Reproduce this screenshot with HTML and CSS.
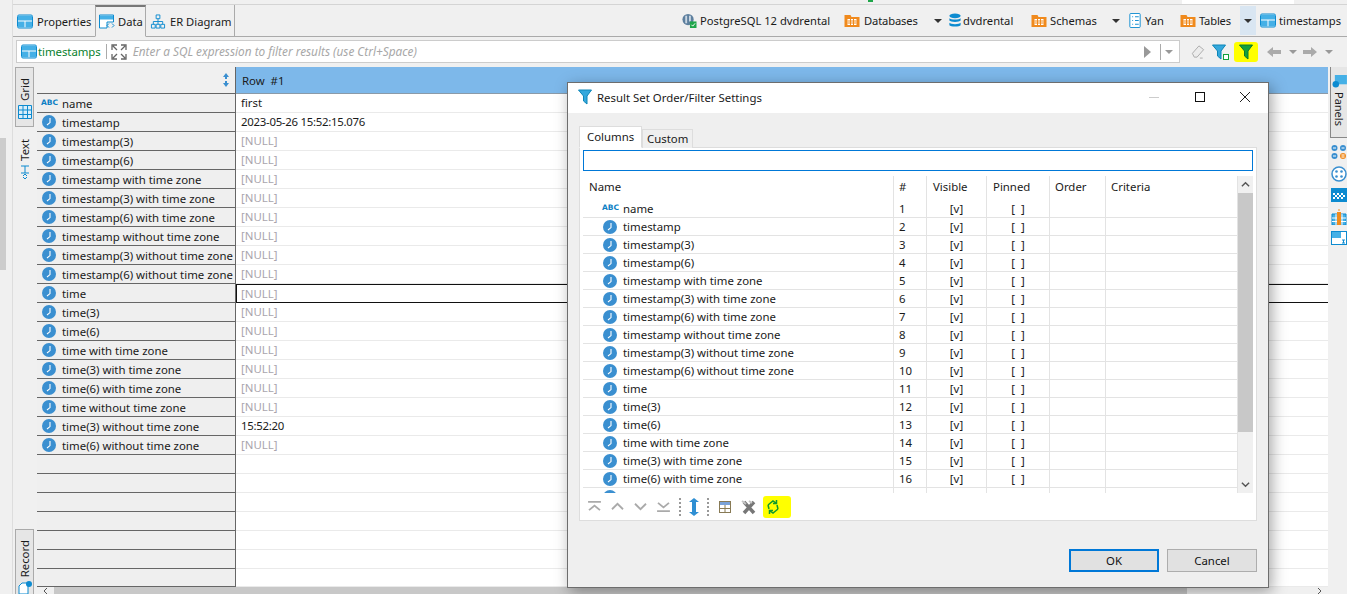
FILE: index.html

```html
<!DOCTYPE html>
<html lang="en">
<head>
  <meta charset="UTF-8">
  <title>Result Set Order/Filter Settings</title>
  <link rel="stylesheet" href="styles.css">
</head>
<body>
  <svg class="defs" width="0" height="0">
    <symbol id="clock" viewBox="0 0 14 14">
      <circle cx="7" cy="7" r="7" fill="#3a8fd0"/>
      <path d="M8 3v4.6L5 10" fill="none" stroke="#fff" stroke-width="1.1"/>
    </symbol>
    <symbol id="table" viewBox="0 0 16 14">
      <rect x=".5" y=".5" width="15" height="13" rx="1.5" fill="#fff" stroke="#0d8bd0"/>
      <rect x="1" y="1" width="14" height="5" fill="#45b0e6"/>
      <rect x="1" y="7" width="6.500" height="6" fill="#45b0e6"/>
      <rect x="8.500" y="7" width="6.500" height="6" fill="#45b0e6"/>
    </symbol>
    <symbol id="funnel" viewBox="0 0 14 16">
      <path d="M.5 1h13L9 7v8L5.500 12V7z" fill="#35a8dc" stroke="#0c86b8"/>
    </symbol>
    <symbol id="folder" viewBox="0 0 15 15">
      <path d="M0 2h6l1 2h8v10H0z" fill="#f08a1d"/>
      <rect x="3" y="6" width="9" height="6" fill="#fff"/>
      <path d="M3 8h9M3 10h9M6 6v6M9 6v6" stroke="#f08a1d"/>
    </symbol>
  </svg>

  <div class="left-strip"><span class="strip-thumb"></span></div>

  <div class="workbench">
    <div class="topline">
      <span class="topline-mark"></span>
      <span class="topline-box"></span>
    </div>

    <div class="tabbar">
      <div class="tab"><svg class="ico16"><use href="#table"/></svg>Properties</div>
      <div class="tab tab-active">
        <svg class="ico16" viewBox="0 0 16 14"><path d="M.5.5h14v7H8v6H.5z" fill="#fff" stroke="#0d8bd0"/><rect x="1" y="1" width="13" height="4" fill="#45b0e6"/><path d="M10 9l-2 2 2 2M13 9l2 2-2 2" fill="none" stroke="#0d8bd0"/></svg>
        Data
      </div>
      <div class="tab tab-last">
        <svg class="ico16" viewBox="0 0 16 16"><path d="M6 1h4v4H6zM1 11h4v4H1zM6 11h4v4H6zM11 11h4v4h-4zM8 5v6M3 11V8h10v3" fill="none" stroke="#0d8bd0"/></svg>
        ER Diagram
      </div>

      <div class="crumbs">
        <span class="crumb crumb-pg">
          <svg class="ico16" viewBox="0 0 16 16"><ellipse cx="7" cy="7" rx="6" ry="6" fill="#5d7f9e"/><path d="M5 3v8M9 3v6" stroke="#c9d6e2" stroke-width="2"/><rect x="9" y="9" width="7" height="7" fill="#1ea64a"/><path d="M10.500 12.500l1.500 1.500 2.500-3" fill="none" stroke="#fff"/></svg>
          PostgreSQL 12 dvdrental
        </span>
        <span class="crumb crumb-db"><svg class="ico16"><use href="#folder"/></svg>Databases<i class="caret"></i></span>
        <span class="crumb crumb-rental">
          <svg class="ico16" viewBox="0 0 14 16"><ellipse cx="7" cy="3" rx="6" ry="2.500" fill="#0d8bd0"/><path d="M1 5.500c1 2 11 2 12 0v2.500c-1 2-11 2-12 0zM1 10.500c1 2 11 2 12 0V13c-1 2-11 2-12 0z" fill="#0d8bd0"/></svg>
          dvdrental
        </span>
        <span class="crumb crumb-schemas"><svg class="ico16"><use href="#folder"/></svg>Schemas<i class="caret"></i></span>
        <span class="crumb crumb-yan">
          <svg class="ico16" viewBox="0 0 14 16"><rect x="1.500" y=".5" width="11" height="15" rx="1" fill="#fff" stroke="#0d8bd0"/><path d="M4 4h1M7 4h4M4 8h1M7 8h4M4 12h1M7 12h4" stroke="#0d8bd0"/></svg>
          Yan
        </span>
        <span class="crumb crumb-tables"><svg class="ico16"><use href="#folder"/></svg>Tables</span>
        <span class="crumb-drop"><i class="caret"></i></span>
        <span class="crumb crumb-ts"><svg class="ico16"><use href="#table"/></svg>timestamps</span>
      </div>
    </div>

    <div class="filterbar">
      <div class="filter-input">
        <svg class="ico16"><use href="#table"/></svg>
        <span class="filter-table">timestamps</span>
        <span class="filter-sep"></span>
        <svg class="ico16 filter-expand" viewBox="0 0 16 16"><path d="M1 6V1h5M2 2l4 4M10 1h5v5M14 2l-4 4M1 10v5h5M2 14l4-4M15 10v5h-5M14 14l-4-4" fill="none" stroke="#666" stroke-width="1.300"/></svg>
        <span class="filter-hint">Enter a SQL expression to filter results (use Ctrl+Space)</span>
        <span class="filter-run"></span>
        <span class="filter-sep2"></span>
        <i class="caret caret-grey"></i>
      </div>
      <div class="filter-tools">
        <svg class="ico16 tool-eraser" viewBox="0 0 16 16"><path d="M2 10l7-8 5 4-7 8H4z" fill="#ececec" stroke="#aaa"/><path d="M10 15h3" stroke="#aaa"/></svg>
        <span class="tool-funnel"><svg class="ico-funnel"><use href="#funnel"/></svg><i class="tool-badge"></i></span>
        <span class="mark-yellow mark-funnel">
          <svg class="ico-funnel" viewBox="0 0 14 16"><path d="M.5 1h13L9 7v8L5.500 12V7z" fill="#12a13c" stroke="#0a7a2b"/></svg>
        </span>
        <svg class="nav-arrow" viewBox="0 0 14 10"><path d="M0 5l6-5v3h8v4H6v3z" fill="#aaa"/></svg>
        <i class="caret caret-grey"></i>
        <svg class="nav-arrow" viewBox="0 0 14 10"><path d="M14 5L8 0v3H0v4h8v3z" fill="#aaa"/></svg>
        <i class="caret caret-grey"></i>
      </div>
    </div>

    <div class="editor">
      <div class="side-tabs">
        <div class="vtab vtab-on"><span>Grid</span>
          <svg class="vtab-ico" viewBox="0 0 14 14"><path d="M.5.5h13v13H.5zM.5 5h13M.5 9.500h13M5 .5v13M9.500 .5v13" fill="#d9eefa" stroke="#0d8bd0"/></svg>
        </div>
        <div class="vtab vtab-text"><span>Text</span>
          <svg class="vtab-ico" viewBox="0 0 14 14"><path d="M3 1h8M7 1v7M3 8h8M5 11l2-2 2 2M5 12l2 2 2-2" fill="none" stroke="#0d8bd0"/></svg>
        </div>
        <div class="vtab vtab-record"><span>Record</span>
          <svg class="vtab-ico" viewBox="0 0 14 14"><path d="M1 5l3-3h6v11H1z" fill="#fff" stroke="#0d8bd0"/><circle cx="11" cy="3" r="3" fill="#0d8bd0"/></svg>
        </div>
      </div>

      <div class="grid">
        <div class="grid-head">
          <div class="head-gutter"><svg class="sort-ico" viewBox="0 0 8 14"><path d="M4 0l3 4H5v2H3V4H1zM4 14l3-4H5V8H3v2H1z" fill="#3a8fd0"/></svg></div>
          <div class="head-cell">Row&nbsp; #1</div>
        </div>
        <div class="grid-row"><div class="gutter"><span class="abc">ABC</span>name</div><div class="cell">first</div></div>
        <div class="grid-row"><div class="gutter"><svg class="clock"><use href="#clock"/></svg>timestamp</div><div class="cell cell-date">2023-05-26 15:52:15.076</div></div>
        <div class="grid-row"><div class="gutter"><svg class="clock"><use href="#clock"/></svg>timestamp(3)</div><div class="cell null">[NULL]</div></div>
        <div class="grid-row"><div class="gutter"><svg class="clock"><use href="#clock"/></svg>timestamp(6)</div><div class="cell null">[NULL]</div></div>
        <div class="grid-row"><div class="gutter"><svg class="clock"><use href="#clock"/></svg>timestamp with time zone</div><div class="cell null">[NULL]</div></div>
        <div class="grid-row"><div class="gutter"><svg class="clock"><use href="#clock"/></svg>timestamp(3) with time zone</div><div class="cell null">[NULL]</div></div>
        <div class="grid-row"><div class="gutter"><svg class="clock"><use href="#clock"/></svg>timestamp(6) with time zone</div><div class="cell null">[NULL]</div></div>
        <div class="grid-row"><div class="gutter"><svg class="clock"><use href="#clock"/></svg>timestamp without time zone</div><div class="cell null">[NULL]</div></div>
        <div class="grid-row"><div class="gutter"><svg class="clock"><use href="#clock"/></svg>timestamp(3) without time zone</div><div class="cell null">[NULL]</div></div>
        <div class="grid-row"><div class="gutter"><svg class="clock"><use href="#clock"/></svg>timestamp(6) without time zone</div><div class="cell null">[NULL]</div></div>
        <div class="grid-row"><div class="gutter"><svg class="clock"><use href="#clock"/></svg>time</div><div class="cell null cell-focus">[NULL]</div></div>
        <div class="grid-row"><div class="gutter"><svg class="clock"><use href="#clock"/></svg>time(3)</div><div class="cell null">[NULL]</div></div>
        <div class="grid-row"><div class="gutter"><svg class="clock"><use href="#clock"/></svg>time(6)</div><div class="cell null">[NULL]</div></div>
        <div class="grid-row"><div class="gutter"><svg class="clock"><use href="#clock"/></svg>time with time zone</div><div class="cell null">[NULL]</div></div>
        <div class="grid-row"><div class="gutter"><svg class="clock"><use href="#clock"/></svg>time(3) with time zone</div><div class="cell null">[NULL]</div></div>
        <div class="grid-row"><div class="gutter"><svg class="clock"><use href="#clock"/></svg>time(6) with time zone</div><div class="cell null">[NULL]</div></div>
        <div class="grid-row"><div class="gutter"><svg class="clock"><use href="#clock"/></svg>time without time zone</div><div class="cell null">[NULL]</div></div>
        <div class="grid-row"><div class="gutter"><svg class="clock"><use href="#clock"/></svg>time(3) without time zone</div><div class="cell cell-date">15:52:20</div></div>
        <div class="grid-row"><div class="gutter"><svg class="clock"><use href="#clock"/></svg>time(6) without time zone</div><div class="cell null">[NULL]</div></div>
        <div class="grid-row"><div class="gutter"></div><div class="cell"></div></div>
        <div class="grid-row"><div class="gutter"></div><div class="cell"></div></div>
        <div class="grid-row"><div class="gutter"></div><div class="cell"></div></div>
        <div class="grid-row"><div class="gutter"></div><div class="cell"></div></div>
        <div class="grid-row"><div class="gutter"></div><div class="cell"></div></div>
        <div class="grid-row"><div class="gutter"></div><div class="cell"></div></div>
        <div class="grid-row grid-row-end"><div class="gutter"></div><div class="cell"></div></div>
        <div class="hscroll">
          <svg class="hscroll-arrow" viewBox="0 0 17 7"><path d="M10 1L7 4l3 3" fill="none" stroke="#555"/></svg>
          <span class="hscroll-thumb"></span>
          <svg class="hscroll-arrow hscroll-arrow-r" viewBox="0 0 17 7"><path d="M7 1l3 3-3 3" fill="none" stroke="#555"/></svg>
        </div>
      </div>

      <div class="right-panel">
        <div class="vtab-panels"><span>Panels</span>
          <svg class="panels-ico" viewBox="0 0 16 14"><rect x="3" y="0" width="13" height="10" fill="#45b0e6"/><circle cx="4" cy="10" r="3.500" fill="#0d8bd0"/></svg>
        </div>
        <svg class="panel-ico" viewBox="0 0 16 14"><circle cx="3.500" cy="3" r="3" fill="#3a8fd0"/><circle cx="12" cy="3" r="3" fill="#3a8fd0"/><circle cx="3.500" cy="11" r="3" fill="#3a8fd0"/><circle cx="12" cy="11" r="3" fill="#f08a1d"/><path d="M2 3h3M10.500 3h3M2 11h3M10.500 10h3M10.500 12h3" stroke="#fff"/></svg>
        <svg class="panel-ico panel-ico-tall" viewBox="0 0 16 16"><circle cx="8" cy="8" r="7" fill="#fff" stroke="#3a8fd0" stroke-width="1.500"/><circle cx="5.500" cy="5.500" r="1.300" fill="#3a8fd0"/><circle cx="10.500" cy="5.500" r="1.300" fill="#3a8fd0"/><circle cx="5.500" cy="10.500" r="1.300" fill="#3a8fd0"/><circle cx="10.500" cy="10.500" r="1.300" fill="#3a8fd0"/></svg>
        <svg class="panel-ico" viewBox="0 0 16 14"><rect width="16" height="14" fill="#0d8bd0"/><path d="M2 5h2v2H2zM6 5h2v2H6zM10 5h2v2h-2zM4 7h2v2H4zM8 7h2v2H8zM12 7h2v2h-2zM2 9h2v2H2zM6 9h2v2H6zM10 9h2v2h-2z" fill="#fff"/></svg>
        <svg class="panel-ico panel-ico-tall" viewBox="0 0 16 16"><path d="M1 5h14v11H1z" fill="#45b0e6" stroke="#0d8bd0"/><path d="M1 9h14M1 12.500h14M5 5v11M11 5v11" stroke="#fff"/><rect x="6" y="3" width="4" height="13" fill="#f08a1d"/><path d="M8 0v2" stroke="#f08a1d"/></svg>
        <svg class="panel-ico" viewBox="0 0 16 14"><rect x=".5" y=".5" width="15" height="13" fill="#fff" stroke="#0d8bd0"/><rect x="1" y="1" width="9" height="6" fill="#45b0e6"/><path d="M11 9h3M12.500 9v3M11 12h3" stroke="#0d8bd0"/></svg>
      </div>
    </div>
  </div>

  <!-- floating dialog -->
  <div class="dialog">
    <div class="dlg-title">
      <svg class="ico-funnel"><use href="#funnel"/></svg>
      <span class="dlg-caption">Result Set Order/Filter Settings</span>
      <span class="win-min"></span>
      <span class="win-max"></span>
      <svg class="win-close" viewBox="0 0 12 12"><path d="M1 1l10 10M11 1L1 11" stroke="#222" stroke-width="1"/></svg>
    </div>

    <div class="dlg-body">
      <div class="dlg-tabs">
        <div class="dlg-tab dlg-tab-on">Columns</div>
        <div class="dlg-tab">Custom</div>
      </div>

      <div class="dlg-panel">
        <div class="dlg-search"></div>

        <div class="col-area">
          <div class="col-table">
            <div class="col-row col-head">
              <div class="c-name">Name</div><div class="c-num">#</div><div class="c-vis c-left">Visible</div><div class="c-pin c-left">Pinned</div><div class="c-ord">Order</div><div class="c-crit">Criteria</div>
            </div>
            <div class="col-row"><div class="c-name"><span class="abc">ABC</span>name</div><div class="c-num">1</div><div class="c-vis">[v]</div><div class="c-pin">[&nbsp; ]</div><div class="c-ord"></div><div class="c-crit"></div></div>
            <div class="col-row"><div class="c-name"><svg class="clock"><use href="#clock"/></svg>timestamp</div><div class="c-num">2</div><div class="c-vis">[v]</div><div class="c-pin">[&nbsp; ]</div><div class="c-ord"></div><div class="c-crit"></div></div>
            <div class="col-row"><div class="c-name"><svg class="clock"><use href="#clock"/></svg>timestamp(3)</div><div class="c-num">3</div><div class="c-vis">[v]</div><div class="c-pin">[&nbsp; ]</div><div class="c-ord"></div><div class="c-crit"></div></div>
            <div class="col-row"><div class="c-name"><svg class="clock"><use href="#clock"/></svg>timestamp(6)</div><div class="c-num">4</div><div class="c-vis">[v]</div><div class="c-pin">[&nbsp; ]</div><div class="c-ord"></div><div class="c-crit"></div></div>
            <div class="col-row"><div class="c-name"><svg class="clock"><use href="#clock"/></svg>timestamp with time zone</div><div class="c-num">5</div><div class="c-vis">[v]</div><div class="c-pin">[&nbsp; ]</div><div class="c-ord"></div><div class="c-crit"></div></div>
            <div class="col-row"><div class="c-name"><svg class="clock"><use href="#clock"/></svg>timestamp(3) with time zone</div><div class="c-num">6</div><div class="c-vis">[v]</div><div class="c-pin">[&nbsp; ]</div><div class="c-ord"></div><div class="c-crit"></div></div>
            <div class="col-row"><div class="c-name"><svg class="clock"><use href="#clock"/></svg>timestamp(6) with time zone</div><div class="c-num">7</div><div class="c-vis">[v]</div><div class="c-pin">[&nbsp; ]</div><div class="c-ord"></div><div class="c-crit"></div></div>
            <div class="col-row"><div class="c-name"><svg class="clock"><use href="#clock"/></svg>timestamp without time zone</div><div class="c-num">8</div><div class="c-vis">[v]</div><div class="c-pin">[&nbsp; ]</div><div class="c-ord"></div><div class="c-crit"></div></div>
            <div class="col-row"><div class="c-name"><svg class="clock"><use href="#clock"/></svg>timestamp(3) without time zone</div><div class="c-num">9</div><div class="c-vis">[v]</div><div class="c-pin">[&nbsp; ]</div><div class="c-ord"></div><div class="c-crit"></div></div>
            <div class="col-row"><div class="c-name"><svg class="clock"><use href="#clock"/></svg>timestamp(6) without time zone</div><div class="c-num">10</div><div class="c-vis">[v]</div><div class="c-pin">[&nbsp; ]</div><div class="c-ord"></div><div class="c-crit"></div></div>
            <div class="col-row"><div class="c-name"><svg class="clock"><use href="#clock"/></svg>time</div><div class="c-num">11</div><div class="c-vis">[v]</div><div class="c-pin">[&nbsp; ]</div><div class="c-ord"></div><div class="c-crit"></div></div>
            <div class="col-row"><div class="c-name"><svg class="clock"><use href="#clock"/></svg>time(3)</div><div class="c-num">12</div><div class="c-vis">[v]</div><div class="c-pin">[&nbsp; ]</div><div class="c-ord"></div><div class="c-crit"></div></div>
            <div class="col-row"><div class="c-name"><svg class="clock"><use href="#clock"/></svg>time(6)</div><div class="c-num">13</div><div class="c-vis">[v]</div><div class="c-pin">[&nbsp; ]</div><div class="c-ord"></div><div class="c-crit"></div></div>
            <div class="col-row"><div class="c-name"><svg class="clock"><use href="#clock"/></svg>time with time zone</div><div class="c-num">14</div><div class="c-vis">[v]</div><div class="c-pin">[&nbsp; ]</div><div class="c-ord"></div><div class="c-crit"></div></div>
            <div class="col-row"><div class="c-name"><svg class="clock"><use href="#clock"/></svg>time(3) with time zone</div><div class="c-num">15</div><div class="c-vis">[v]</div><div class="c-pin">[&nbsp; ]</div><div class="c-ord"></div><div class="c-crit"></div></div>
            <div class="col-row"><div class="c-name"><svg class="clock"><use href="#clock"/></svg>time(6) with time zone</div><div class="c-num">16</div><div class="c-vis">[v]</div><div class="c-pin">[&nbsp; ]</div><div class="c-ord"></div><div class="c-crit"></div></div>
            <div class="col-row"><div class="c-name"><svg class="clock"><use href="#clock"/></svg>time without time zone</div><div class="c-num">17</div><div class="c-vis">[v]</div><div class="c-pin">[&nbsp; ]</div><div class="c-ord"></div><div class="c-crit"></div></div>
          </div>
          <div class="vscroll">
            <svg class="vscroll-arrow" viewBox="0 0 10 6"><path d="M1 5l4-4 4 4" fill="none" stroke="#555" stroke-width="1.600"/></svg>
            <div class="vscroll-track"><span class="vscroll-thumb"></span></div>
            <svg class="vscroll-arrow" viewBox="0 0 10 6"><path d="M1 1l4 4 4-4" fill="none" stroke="#555" stroke-width="1.600"/></svg>
          </div>
        </div>

        <div class="col-tools">
          <svg class="tool" viewBox="0 0 16 12"><path d="M1 1h14M2 10l6-5 6 5" fill="none" stroke="#aaa" stroke-width="2"/></svg>
          <svg class="tool" viewBox="0 0 16 12"><path d="M2 9l6-6 6 6" fill="none" stroke="#aaa" stroke-width="2"/></svg>
          <svg class="tool" viewBox="0 0 16 12"><path d="M2 3l6 6 6-6" fill="none" stroke="#aaa" stroke-width="2"/></svg>
          <svg class="tool" viewBox="0 0 16 12"><path d="M1 11h14M2 2l6 5 6-5" fill="none" stroke="#aaa" stroke-width="2"/></svg>
          <span class="tool-sep"></span>
          <svg class="tool-v" viewBox="0 0 12 18"><path d="M6 0l5 4H8v10h3l-5 4-5-4h3V4H1z" fill="#2f8fd3"/></svg>
          <span class="tool-sep"></span>
          <svg class="tool-t" viewBox="0 0 12 12"><rect x=".5" y=".5" width="11" height="11" fill="#fff" stroke="#887a55"/><rect x="1" y="1" width="10" height="3" fill="#7aa2d8"/><path d="M.5 7.500h11M6 4v8" stroke="#887a55"/></svg>
          <svg class="tool-x" viewBox="0 0 16 16"><path d="M3 3l10 11M13 3L3 14" stroke="#777" stroke-width="3.500"/><path d="M1 2l4 3M8 2l3 2" stroke="#c4c4c4" stroke-width="2"/></svg>
          <span class="mark-yellow mark-sync">
            <svg class="tool-sync" viewBox="0 0 16 16"><path d="M3 6l5-4 3 2M11.500 1v3.500H8M13 10l-5 4-3-2M4.500 15v-3.500H8" fill="none" stroke="#109a2e" stroke-width="1.500"/><path d="M3 6l1 4M13 10l-1-4" stroke="#109a2e" stroke-width="1.500"/></svg>
          </span>
        </div>
      </div>

      <div class="dlg-actions">
        <button class="btn btn-ok">OK</button>
        <button class="btn">Cancel</button>
      </div>
    </div>
  </div>
</body>
</html>
```

FILE: styles.css

```css
* {
  box-sizing: border-box;
}
html, body {
  margin: 0;
  height: 100%;
}
body {
  display: flex;
  width: 1347px;
  height: 594px;
  overflow: hidden;
  font-family: "Noto Sans", Arial, sans-serif;
  font-size: 11.4px;
  color: #1a1a1a;
  background-color: #f0f0f0;
}
.defs {
  position: absolute;
}
.ico16 {
  width: 16px;
  height: 15px;
  flex: none;
}
.ico-funnel {
  width: 14px;
  height: 16px;
  flex: none;
}
.caret {
  display: inline-block;
  width: 0;
  height: 0;
  border-left: 4px solid transparent;
  border-right: 4px solid transparent;
  border-top: 4px solid #333;
}
.caret-grey {
  border-top-color: #999;
}

.left-strip {
  width: 13px;
  flex: none;
  border-right: 1px solid #ddd;
  padding-top: 138px;
}
.strip-thumb {
  display: block;
  width: 6px;
  height: 132px;
  background-color: #ccc;
}

.workbench {
  flex: 1;
  min-width: 0;
  display: flex;
  flex-direction: column;
}
.topline {
  height: 5px;
  flex: none;
  display: flex;
  border-bottom: 1px solid #d4d4d4;
}
.topline-mark {
  width: 5px;
  height: 2px;
  margin-left: 855px;
  background-color: #1ea64a;
}
.topline-box {
  width: 112px;
  margin-left: 309px;
  background-color: #fff;
}

.tabbar {
  height: 32px;
  flex: none;
  display: flex;
  align-items: stretch;
  border-bottom: 1px solid #aaa;
}
.tab {
  display: flex;
  align-items: center;
  gap: 4px;
  padding: 0 0 0 4px;
  font-size: 11.2px;
  white-space: nowrap;
  margin-bottom: -1px;
  border-right: 1px solid #aaa;
}
.tab:first-child {
  width: 82px;
  border-right: 0;
}
.tab-active {
  width: 51px;
  gap: 3px;
  border-top: 2px solid #777;
  border-left: 1px solid #aaa;
  border-right: 1px solid #aaa;
  border-bottom: 1px solid #f0f0f0;
  padding-left: 3px;
}
.tab-last {
  width: 89px;
}
.crumbs {
  margin-left: auto;
  display: flex;
  align-items: center;
  height: 100%;
  padding-right: 6px;
  font-size: 11.2px;
}
.crumb {
  display: flex;
  align-items: center;
  gap: 3px;
  white-space: nowrap;
}
.crumb-pg {
  width: 163px;
}
.crumb-db {
  width: 103px;
  gap: 4px;
  letter-spacing: -.15px;
}
.crumb-db .caret,
.crumb-schemas .caret {
  margin-left: 12px;
}
.crumb-rental {
  width: 84px;
  gap: 0;
}
.crumb-schemas {
  width: 96px;
}
.crumb-yan {
  width: 53px;
  gap: 2px;
}
.crumb-tables {
  width: 60px;
  letter-spacing: -.2px;
}
.crumb-drop {
  width: 16px;
  height: 29px;
  margin-right: 4px;
  display: flex;
  align-items: center;
  justify-content: center;
  background-color: #d9e6f2;
}
.crumb-ts {
  width: 81px;
}

.filterbar {
  height: 30px;
  flex: none;
  display: flex;
  align-items: flex-start;
  padding: 3px 0 0 3px;
}
.filter-input {
  width: 1164px;
  height: 23px;
  display: flex;
  align-items: center;
  background-color: #fff;
  border: 1px solid #ccc;
  padding: 0 6px 0 4px;
}
.filter-table {
  margin: 0 0 1px 1px;
  letter-spacing: -.05px;
  color: #0a7f2e;
}
.filter-sep {
  width: 1px;
  height: 15px;
  margin: 0 4px 0 5px;
  background-color: #aaa;
}
.filter-expand {
  height: 16px;
}
.filter-hint {
  margin: 0 0 2px 6px;
  font-size: 11.8px;
  font-style: italic;
  color: #a8a8a8;
}
.filter-run {
  margin-left: auto;
  width: 0;
  height: 0;
  border-top: 6px solid transparent;
  border-bottom: 6px solid transparent;
  border-left: 7px solid #999;
}
.filter-sep2 {
  width: 1px;
  height: 16px;
  margin: 0 4px 0 9px;
  background-color: #aaa;
}
.filter-tools {
  display: flex;
  align-items: center;
  margin-left: 10px;
  height: 23px;
}
.tool-eraser {
  margin-right: 6px;
}
.tool-funnel {
  position: relative;
  display: flex;
  margin-right: 8px;
}
.tool-badge {
  position: absolute;
  right: -3px;
  bottom: 0;
  width: 6px;
  height: 6px;
  background-color: #fff;
  border: 1.500px solid #12a13c;
}
.mark-yellow {
  display: flex;
  align-items: center;
  justify-content: center;
  background-color: #ffff00;
  border-radius: 3px;
}
.mark-funnel {
  width: 24px;
  height: 20px;
  margin-right: 9px;
}
.nav-arrow {
  width: 14px;
  height: 10px;
  flex: none;
  margin-right: 8px;
}
.filter-tools .caret {
  margin-right: 6px;
}

.editor {
  flex: 1;
  min-height: 0;
  display: flex;
}
.side-tabs {
  width: 24px;
  flex: none;
  position: relative;
  display: flex;
  flex-direction: column;
  padding-left: 2px;
}
.vtab {
  width: 19px;
  display: flex;
  flex-direction: column;
  align-items: center;
  gap: 4px;
  padding: 10px 0 4px;
}
.vtab span {
  writing-mode: vertical-rl;
  transform: rotate(180deg);
}
.vtab-on {
  height: 60px;
  background-color: #e6e6e6;
  border: 1px solid #aaa;
}
.vtab-text {
  height: 50px;
  margin-top: 8px;
  padding-top: 4px;
}
.vtab-record {
  margin-top: auto;
  height: 65px;
  background-color: #e6e6e6;
  border: 1px solid #aaa;
  border-bottom: 0;
}
.vtab-ico {
  width: 14px;
  height: 14px;
  flex: none;
}

.grid {
  flex: 1;
  min-width: 0;
  display: flex;
  flex-direction: column;
  background-color: #fff;
}
.grid-head {
  height: 27px;
  flex: none;
  display: flex;
}
.head-gutter {
  width: 199px;
  flex: none;
  display: flex;
  align-items: center;
  justify-content: flex-end;
  padding-right: 5px;
  background-color: #f0f0f0;
  border-right: 1px solid #666;
  border-bottom: 1px solid #666;
}
.sort-ico {
  width: 8px;
  height: 14px;
}
.head-cell {
  flex: 1;
  display: flex;
  align-items: center;
  padding-left: 6px;
  background-color: #7db8ea;
  border-bottom: 1px solid #8a9aa8;
}
.grid-row {
  height: 19px;
  flex: none;
  display: flex;
}
.grid-row-end {
  height: 18px;
}
.gutter {
  width: 199px;
  flex: none;
  display: flex;
  align-items: center;
  gap: 6px;
  padding-left: 5px;
  white-space: nowrap;
  background-color: #efefef;
  border-right: 1px solid #666;
  border-bottom: 1px solid #666;
}
.clock {
  width: 14px;
  height: 14px;
  flex: none;
}
.abc {
  width: 16px;
  flex: none;
  margin: 0 -1px 2px -1px;
  font-family: "DejaVu Sans", sans-serif;
  font-size: 7.5px;
  font-weight: 700;
  color: #0d7fc4;
}
.cell {
  flex: 1;
  display: flex;
  align-items: center;
  padding: 0 0 2px 5px;
  border-bottom: 1px solid #eaeaea;
}
.cell-date {
  letter-spacing: -.27px;
}
.null {
  color: #a9a4ad;
}
.cell-focus {
  border: 1px solid #111;
  border-right: 0;
  padding: 0 0 1px 4px;
}
.hscroll {
  height: 7px;
  flex: none;
  display: flex;
  align-items: center;
  overflow: hidden;
  background-color: #f0f0f0;
}
.hscroll-arrow {
  width: 17px;
  height: 7px;
  flex: none;
}
.hscroll-thumb {
  width: 1133px;
  height: 7px;
  background-color: #c8c8c8;
}
.hscroll-arrow-r {
  margin-left: auto;
}

.right-panel {
  width: 19px;
  flex: none;
  display: flex;
  flex-direction: column;
  align-items: flex-end;
}
.vtab-panels {
  position: relative;
  width: 17px;
  height: 71px;
  display: flex;
  flex-direction: column;
  align-items: center;
  padding-top: 25px;
  margin-bottom: 7px;
  font-size: 11px;
  background-color: #e6e6e6;
  border-left: 1px solid #888;
  border-bottom: 1px solid #888;
}
.vtab-panels span {
  writing-mode: vertical-rl;
}
.panels-ico {
  position: absolute;
  top: 8px;
  left: 1px;
  width: 15px;
  height: 13px;
}
.panel-ico {
  width: 16px;
  height: 14px;
  flex: none;
  margin: 0 0 7px;
}
.panel-ico-tall {
  height: 16px;
  margin-bottom: 6px;
}

.dialog {
  position: absolute;
  left: 567px;
  top: 82px;
  width: 702px;
  height: 506px;
  display: flex;
  flex-direction: column;
  background-color: #efefef;
  border: 1px solid #6d6d6d;
  box-shadow: 3px 4px 14px rgba(0, 0, 0, 0.35);
}
.dlg-title {
  height: 30px;
  flex: none;
  display: flex;
  align-items: center;
  padding: 0 0 2px 10px;
  background-color: #fff;
}
.dlg-caption {
  margin-left: 5px;
}
.win-min {
  width: 10px;
  height: 1px;
  margin-left: auto;
  background-color: #ccc;
}
.win-max {
  width: 10px;
  height: 10px;
  margin-left: 36px;
  border: 1px solid #111;
}
.win-close {
  width: 12px;
  height: 12px;
  margin: 0 17px 0 34px;
}
.dlg-body {
  flex: 1;
  min-height: 0;
  padding: 13px 11px 0;
}
.dlg-tabs {
  height: 22px;
  display: flex;
  align-items: flex-end;
  position: relative;
  margin-bottom: -1px;
}
.dlg-tab {
  height: 19px;
  padding: 0 4px 2px;
  display: flex;
  align-items: center;
  border: 1px solid #ddd;
  border-bottom: 0;
  background-color: #efefef;
}
.dlg-tab-on {
  width: 63px;
  height: 22px;
  padding: 0 7px 2px;
  background-color: #fff;
  border-bottom: 1px solid #fff;
}
.dlg-panel {
  width: 678px;
  height: 374px;
  display: flex;
  flex-direction: column;
  padding: 2px 3px 0;
  background-color: #fff;
  border: 1px solid #ddd;
}
.dlg-search {
  height: 21px;
  flex: none;
  border: 1px solid #0078d7;
}
.col-area {
  height: 317px;
  flex: none;
  margin-top: 5px;
  display: flex;
}
.col-table {
  flex: 1;
  min-width: 0;
  overflow: hidden;
}
.col-row {
  height: 18px;
  display: flex;
  border-bottom: 1px solid #e3e3e3;
}
.col-row > div {
  display: flex;
  align-items: center;
  flex: none;
  white-space: nowrap;
  border-right: 1px solid #e3e3e3;
}
.col-head {
  height: 24px;
  border-bottom: 0;
}
.col-head > div {
  align-items: flex-start;
  padding-top: 3px;
}
.col-row > .c-name {
  width: 311px;
  padding-left: 20px;
  gap: 6px;
}
.col-head > .c-name {
  padding-left: 6px;
}
.col-row > .c-num {
  width: 33px;
  padding-left: 5px;
}
.col-row > .c-vis {
  width: 60px;
  justify-content: center;
}
.col-row > .c-pin {
  width: 63px;
  justify-content: center;
}
.col-row > .c-ord {
  width: 56px;
  padding-left: 5px;
}
.col-row > .c-crit {
  width: 132px;
  padding-left: 5px;
}
.col-row > .c-left {
  justify-content: flex-start;
  padding-left: 6px;
}
.vscroll {
  width: 15px;
  flex: none;
  display: flex;
  flex-direction: column;
  background-color: #f0f0f0;
}
.vscroll-arrow {
  width: 15px;
  height: 17px;
  flex: none;
  padding: 5px 3px;
}
.vscroll-track {
  flex: 1;
}
.vscroll-thumb {
  display: block;
  height: 239px;
  background-color: #c8c8c8;
}
.col-tools {
  flex: 1;
  display: flex;
  align-items: center;
  padding-left: 4px;
}
.tool {
  width: 15px;
  height: 11px;
  margin-right: 8px;
}
.tool-sep {
  width: 2px;
  height: 18px;
  margin-right: 7px;
  background-image: linear-gradient(#999 50%, transparent 50%);
  background-size: 2px 4px;
}
.tool-v {
  width: 12px;
  height: 18px;
  margin-right: 7px;
}
.tool-t {
  width: 12px;
  height: 12px;
  margin: 0 10px 0 3px;
}
.tool-x {
  width: 16px;
  height: 16px;
}
.tool-sync {
  width: 16px;
  height: 16px;
  margin-right: 8px;
}
.mark-sync {
  width: 28px;
  height: 22px;
  margin-left: 6px;
}
.dlg-actions {
  display: flex;
  justify-content: flex-end;
  gap: 8px;
  margin-top: 28px;
}
.btn {
  width: 90px;
  height: 23px;
  padding: 0;
  font: inherit;
  color: #111;
  background-color: #e1e1e1;
  border: 1px solid #adadad;
}
.btn-ok {
  border: 2px solid #0078d7;
}
```
